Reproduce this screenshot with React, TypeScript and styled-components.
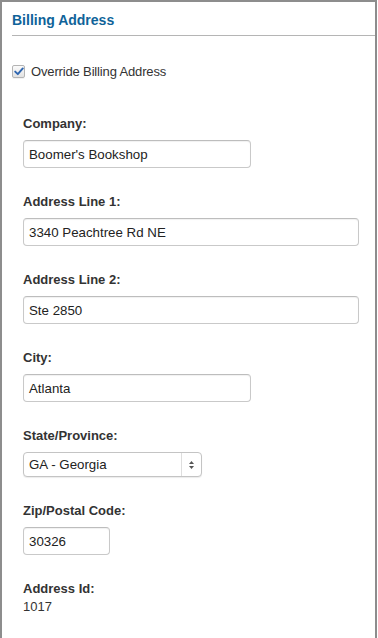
import React from "react";
import styled, { createGlobalStyle } from "styled-components";

const Global = createGlobalStyle`
  html, body { margin: 0; padding: 0; background: #ffffff; }
  body { font-family: "Liberation Sans", Arial, Helvetica, sans-serif; color: #333; }
  * { box-sizing: border-box; }
`;

const Panel = styled.div`
  width: 377px;
  min-height: 638px;
  border: 2px solid #8d8d8d;
  border-bottom: none;
  background: #fff;
`;

const Header = styled.div`
  margin-left: 10px;
  padding-top: 10px;
  padding-bottom: 7px;
  border-bottom: 1px solid #b5b5b5;
`;

const Title = styled.h2`
  margin: 0;
  font-size: 14px;
  line-height: 16px;
  font-weight: bold;
  color: #0f6399;
`;

const CheckRow = styled.label`
  display: flex;
  align-items: center;
  gap: 6px;
  margin: 28px 0 0 10px;
  height: 15px;
  font-size: 13px;
  line-height: 15px;
  letter-spacing: -0.15px;
  color: #333;
`;

const CheckBox = styled.span`
  display: inline-flex;
  align-items: center;
  justify-content: center;
  width: 13px;
  height: 13px;
  border: 1px solid #b4b4b4;
  border-radius: 2px;
  background: linear-gradient(#fbfbfb, #e2e2e2);
  box-shadow: 0 1px 0 rgba(0, 0, 0, 0.05);
`;

const Fields = styled.div`
  padding-left: 21px;
  margin-top: 37px;
  display: flex;
  flex-direction: column;
`;

const Group = styled.div`
  display: flex;
  flex-direction: column;
  margin-bottom: 26px;
`;

const Label = styled.div`
  font-size: 13px;
  line-height: 15px;
  font-weight: bold;
  color: #333;
  margin-bottom: 9px;
`;

const Input = styled.div<{ $w: number }>`
  width: ${(p) => p.$w}px;
  height: 28px;
  border: 1px solid #c9c9c9;
  border-top-color: #bdbdbd;
  border-radius: 4px;
  box-shadow: inset 0 1px 1px rgba(0, 0, 0, 0.06);
  padding: 0 5px;
  display: flex;
  align-items: center;
  font-size: 13.3px;
  color: #222;
  background: #fff;
`;

const Select = styled.div<{ $w: number }>`
  width: ${(p) => p.$w}px;
  height: 25px;
  border: 1px solid #c4c4c4;
  border-radius: 4px;
  display: flex;
  align-items: stretch;
  font-size: 13.3px;
  color: #222;
  background: #fff;
  box-shadow: 0 1px 1px rgba(0, 0, 0, 0.08);
`;

const SelectValue = styled.div`
  flex: 1;
  display: flex;
  align-items: center;
  padding-left: 5px;
`;

const SelectArrow = styled.div`
  width: 20px;
  border-left: 1px solid #dedede;
  display: flex;
  align-items: center;
  justify-content: center;
`;

const Value = styled.div`
  font-size: 13px;
  line-height: 15px;
  color: #333;
  margin-top: -6px;
`;

const fields: { label: string; value: string; w: number }[] = [
  { label: "Company:", value: "Boomer's Bookshop", w: 228 },
  { label: "Address Line 1:", value: "3340 Peachtree Rd NE", w: 336 },
  { label: "Address Line 2:", value: "Ste 2850", w: 336 },
  { label: "City:", value: "Atlanta", w: 228 },
];

export default function App() {
  return (
    <>
      <Global />
      <Panel>
        <Header>
          <Title>Billing Address</Title>
        </Header>
        <CheckRow>
          <CheckBox>
            <svg width="10" height="9" viewBox="0 0 10 9">
              <path d="M1.2 4.6 L3.8 7.2 L8.8 1.4" fill="none" stroke="#2f66b0" strokeWidth="1.9" strokeLinecap="round" strokeLinejoin="round" />
            </svg>
          </CheckBox>
          Override Billing Address
        </CheckRow>
        <Fields>
          {fields.map((f) => (
            <Group key={f.label}>
              <Label>{f.label}</Label>
              <Input $w={f.w}>{f.value}</Input>
            </Group>
          ))}
          <Group>
            <Label>State/Province:</Label>
            <Select $w={179}>
              <SelectValue>GA - Georgia</SelectValue>
              <SelectArrow>
                <svg width="7" height="10" viewBox="0 0 7 10">
                  <path d="M3.5 1 L6 4 L1 4 Z" fill="#555" />
                  <path d="M3.5 9 L6 6 L1 6 Z" fill="#555" />
                </svg>
              </SelectArrow>
            </Select>
          </Group>
          <Group>
            <Label>Zip/Postal Code:</Label>
            <Input $w={87}>30326</Input>
          </Group>
          <Group>
            <Label>Address Id:</Label>
            <Value>1017</Value>
          </Group>
        </Fields>
      </Panel>
    </>
  );
}
